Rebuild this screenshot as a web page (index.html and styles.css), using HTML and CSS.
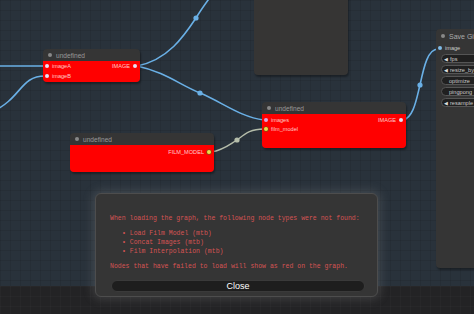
FILE: index.html
```html
<!DOCTYPE html>
<html lang="en">
<head>
    <meta charset="UTF-8">
    <meta name="viewport" content="width=device-width, initial-scale=1.0">
    <title>Graph - missing nodes</title>
    <link rel="stylesheet" href="styles.css">
</head>
<body>
    <div class="app">
        <div class="canvas">
            <!-- links between node slots -->
            <svg class="links" viewBox="0 0 474 286" width="474" height="286">
                <g fill="none" stroke="#6ab0e6" stroke-width="1.6">
                    <path d="M-5 66 H45"/>
                    <path d="M-8 112 C22 98, 20 76, 45 76"/>
                    <path d="M137 66 C168 60, 184 36, 196 18 C202 8, 208 0, 214 -8"/>
                    <path d="M137 66 C165 72, 180 85, 200 93 C222 102, 240 117, 264 120"/>
                    <path d="M403 120 C414 118, 417 96, 420 85 C424 66, 428 49, 438 49"/>
                </g>
                <path d="M211 152 C224 150, 230 144, 237 140 C245 134, 250 129, 264 129" fill="none" stroke="#b5bdaa" stroke-width="1.4"/>
                <g fill="#6ab0e6">
                    <circle cx="196" cy="18" r="2.6"/>
                    <circle cx="200" cy="93" r="2.6"/>
                    <circle cx="420" cy="85" r="2.6"/>
                </g>
                <circle cx="237" cy="140" r="2.6" fill="#b5bdaa"/>
            </svg>

            <div class="node ghost"></div>

            <div class="node concat">
                <div class="node-title"><span class="title-dot"></span>undefined</div>
                <div class="node-body">
                    <div class="slot-row">
                        <span class="slot in"><i class="dot dot-image"></i>imageA</span>
                        <span class="slot out">IMAGE<i class="dot dot-image"></i></span>
                    </div>
                    <div class="slot-row">
                        <span class="slot in"><i class="dot dot-image"></i>imageB</span>
                    </div>
                </div>
            </div>

            <div class="node loader">
                <div class="node-title"><span class="title-dot"></span>undefined</div>
                <div class="node-body">
                    <div class="slot-row">
                        <span class="slot out">FILM_MODEL<i class="dot dot-film"></i></span>
                    </div>
                </div>
            </div>

            <div class="node interp">
                <div class="node-title"><span class="title-dot"></span>undefined</div>
                <div class="node-body">
                    <div class="slot-row">
                        <span class="slot in"><i class="dot dot-pink"></i>images</span>
                        <span class="slot out">IMAGE<i class="dot dot-image"></i></span>
                    </div>
                    <div class="slot-row">
                        <span class="slot in"><i class="dot dot-film"></i>film_model</span>
                    </div>
                </div>
            </div>

            <div class="node save">
                <div class="node-title"><span class="title-dot"></span>Save Gif</div>
                <div class="save-body">
                    <div class="slot-row">
                        <span class="slot in"><i class="dot dot-blue"></i>image</span>
                    </div>
                    <div class="widget"><span class="arrow">&#9664;</span>fps</div>
                    <div class="widget"><span class="arrow">&#9664;</span>resize_by</div>
                    <div class="widget toggle">optimize</div>
                    <div class="widget toggle">pingpong</div>
                    <div class="widget"><span class="arrow">&#9664;</span>resample</div>
                </div>
            </div>
        </div>
        <div class="footer"></div>

        <div class="dialog">
            <p>When loading the graph, the following node types were not found:</p>
            <ul>
                <li>Load Film Model (mtb)</li>
                <li>Concat Images (mtb)</li>
                <li>Film Interpolation (mtb)</li>
            </ul>
            <p>Nodes that have failed to load will show as red on the graph.</p>
            <button type="button" class="close-btn">Close</button>
        </div>
    </div>
</body>
</html>
```

FILE: styles.css
```css
body {
    margin: 0;
    font-family: Arial, "Liberation Sans", sans-serif;
    background: #222;
    overflow: hidden;
}

.app {
    position: relative;
    width: 474px;
    height: 314px;
    display: flex;
    flex-direction: column;
}

.canvas {
    position: relative;
    height: 286px;
    overflow: hidden;
    background-color: #29323b;
    background-image:
        linear-gradient(rgba(0, 0, 0, 0.08) 1px, transparent 1px),
        linear-gradient(90deg, rgba(0, 0, 0, 0.08) 1px, transparent 1px);
    background-size: 10px 10px;
}

.footer {
    flex: 1;
    background-color: #232325;
    background-image:
        linear-gradient(rgba(255, 255, 255, 0.02) 1px, transparent 1px),
        linear-gradient(90deg, rgba(255, 255, 255, 0.02) 1px, transparent 1px);
    background-size: 10px 10px;
}

.links {
    position: absolute;
    left: 0;
    top: 0;
}

/* nodes */
.node {
    position: absolute;
    background: #353535;
    border-radius: 4px;
    box-shadow: 1px 2px 2px rgba(0, 0, 0, 0.35);
}

.node-title {
    height: 12px;
    display: flex;
    align-items: center;
    gap: 4px;
    padding-left: 5px;
    font-size: 6.6px;
    color: #999;
}

.title-dot {
    width: 4px;
    height: 4px;
    border-radius: 50%;
    background: #888;
}

.node-body {
    background: #ff0000;
    border-radius: 0 0 4px 4px;
}

.slot-row {
    height: 10px;
    display: flex;
    align-items: center;
    justify-content: space-between;
}

.slot {
    display: flex;
    align-items: center;
    gap: 3px;
    font-size: 5.6px;
    color: #ffc8c8;
}

.slot.in {
    padding-left: 2px;
}

.slot.out {
    margin-left: auto;
    padding-right: 3px;
}

.dot {
    width: 4px;
    height: 4px;
    border-radius: 50%;
    display: inline-block;
}

.dot-image {
    background: #e6e0f4;
}

.dot-pink {
    background: #d8a8e0;
}

.dot-film {
    background: #f0d84a;
    box-shadow: 0 0 0 0.6px #6a5a10;
}

.dot-blue {
    background: #7fbbe8;
}

.ghost {
    left: 254px;
    top: -12px;
    width: 94px;
    height: 87px;
    background: #363534;
}

.concat {
    left: 43px;
    top: 49px;
    width: 97px;
}

.concat .node-body {
    height: 21px;
}

.loader {
    left: 70px;
    top: 133px;
    width: 144px;
}

.loader .node-body {
    height: 27px;
    padding-top: 2px;
    box-sizing: border-box;
}

.interp {
    left: 262px;
    top: 102px;
    width: 144px;
}

.interp .node-body {
    height: 34px;
    padding-top: 1px;
    box-sizing: border-box;
}

.interp .slot-row {
    height: 9px;
}

.save {
    left: 436px;
    top: 29px;
    width: 70px;
    height: 239px;
}

.save .node-title {
    height: 14px;
    font-size: 7px;
    color: #aaa;
}

.save-body {
    display: flex;
    flex-direction: column;
    gap: 2px;
    padding-left: 5px;
}

.save .slot.in {
    padding-left: 0;
    color: #ccc;
}

.save .slot-row {
    height: 9px;
    margin-left: -3px;
}

.widget {
    height: 9px;
    border-radius: 5px;
    background: #202020;
    border: 1px solid #555;
    box-sizing: border-box;
    display: flex;
    align-items: center;
    gap: 2px;
    padding-left: 2px;
    font-size: 5.6px;
    color: #ccc;
}

.widget.toggle {
    padding-left: 7px;
}

.arrow {
    font-size: 5px;
    color: #ddd;
}

/* missing nodes dialog */
.dialog {
    position: absolute;
    left: 95px;
    top: 193px;
    width: 283px;
    box-sizing: border-box;
    padding: 20px 14px 4px;
    background: #353535;
    border: 1px solid #4d4d4d;
    border-radius: 6px;
    box-shadow: 0 0 10px 3px rgba(150, 150, 150, 0.22);
    font-family: "Liberation Mono", "DejaVu Sans Mono", monospace;
    font-size: 6.5px;
    line-height: 9px;
    color: #d65454;
}

.dialog p {
    margin: 0;
    white-space: nowrap;
}

.dialog ul {
    list-style: none;
    margin: 6px 0;
    padding-left: 12px;
}

.dialog li::before {
    content: "\2022\00a0";
}

.close-btn {
    display: block;
    width: 254px;
    height: 12px;
    margin: 9px 0 0 1px;
    padding: 0;
    border: 1px solid #3a3a3a;
    border-radius: 6px;
    background: #1e1e1e;
    color: #fff;
    font-family: Arial, "Liberation Sans", sans-serif;
    font-size: 9px;
    line-height: 10px;
}
```
